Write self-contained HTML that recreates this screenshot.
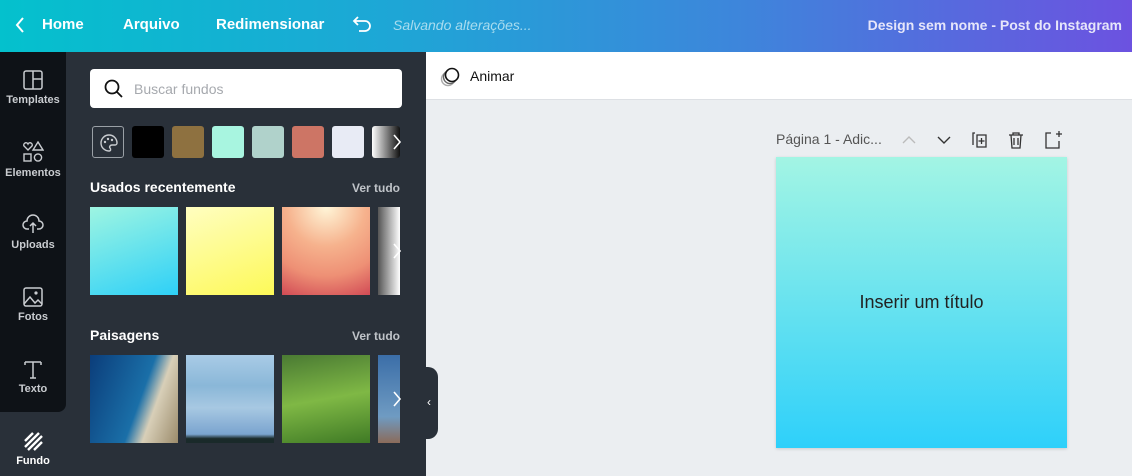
<!DOCTYPE html>
<html><head><meta charset="utf-8"><style>
*{margin:0;padding:0;box-sizing:border-box}
body{width:1132px;height:476px;overflow:hidden;font-family:"Liberation Sans",sans-serif;background:#ebeef1;position:relative}
.top{position:absolute;left:0;top:0;width:1132px;height:52px;background:linear-gradient(90deg,#04c1cd 0%,#1ea6d6 35%,#3d86db 65%,#6c52e0 100%);color:#fff;font-weight:bold;font-size:15px}
.top span{position:absolute;top:16px}
.under{position:absolute;left:0;top:52px;width:426px;height:424px;background:#293039}
.rail{position:absolute;left:0;top:52px;width:66px;height:360px;background:#0e1217;border-bottom-right-radius:8px}
.ri{position:absolute;left:0;width:66px;text-align:center;color:#c9ccd0;font-size:11px;font-weight:bold}
.ri svg{display:block;margin:0 auto 4px}
.search{position:absolute;left:90px;top:69px;width:312px;height:39px;background:#fff;border-radius:4px}
.sw{position:absolute;top:126px;width:32px;height:32px;border-radius:3px}
.h{position:absolute;color:#fff;font-weight:bold;font-size:14px}
.v{position:absolute;color:#bfc3c8;font-weight:bold;font-size:12px}
.th{position:absolute;width:88px;height:88px}
.tool{position:absolute;left:426px;top:52px;width:706px;height:48px;background:#fff;border-bottom:1px solid #dde0e4}
.chev{position:absolute}
</style></head><body>
<div class="top">
<svg style="position:absolute;left:14px;top:16px" width="12" height="18"><path d="M9 2L3 9l6 7" stroke="#fff" stroke-width="2" fill="none"/></svg>
<span style="left:42px">Home</span><span style="left:123px">Arquivo</span><span style="left:216px">Redimensionar</span>
<svg style="position:absolute;left:352px;top:14px" width="22" height="20"><path d="M6 3L2 7l4 4M2 7h11a5 5 0 0 1 0 10H7" stroke="#fff" stroke-width="1.8" fill="none"/></svg>
<span style="left:393px;font-weight:normal;font-style:italic;color:#a8dcef;font-size:14px;top:17px">Salvando alterações...</span>
<span style="right:10px;color:#e6e6fa;font-size:14px;top:17px">Design sem nome - Post do Instagram</span>
</div>
<div class="under"></div>
<div class="rail"></div>
<div class="ri" style="top:70px"><svg width="20" height="20"><rect x="1" y="1" width="18" height="18" rx="2" stroke="#c9ccd0" stroke-width="1.5" fill="none"/><path d="M10 1v18M10 9h9" stroke="#c9ccd0" stroke-width="1.5"/></svg>Templates</div>
<div class="ri" style="top:141px"><svg width="22" height="22"><path d="M6 9L2 5a2 2 0 0 1 4-2 2 2 0 0 1 4 2z" stroke="#c9ccd0" stroke-width="1.4" fill="none"/><path d="M16 1l5 8h-10z" stroke="#c9ccd0" stroke-width="1.4" fill="none"/><rect x="2" y="13" width="7" height="7" stroke="#c9ccd0" stroke-width="1.4" fill="none"/><circle cx="16" cy="16.5" r="3.6" stroke="#c9ccd0" stroke-width="1.4" fill="none"/></svg>Elementos</div>
<div class="ri" style="top:213px"><svg width="22" height="22"><path d="M7 16H5a4 4 0 0 1 0-8 6 6 0 0 1 12 0 4 4 0 0 1 0 8h-2M11 20v-9M8 13l3-3 3 3" stroke="#c9ccd0" stroke-width="1.5" fill="none"/></svg>Uploads</div>
<div class="ri" style="top:287px"><svg width="20" height="20"><rect x="1" y="1" width="18" height="18" rx="2" stroke="#c9ccd0" stroke-width="1.5" fill="none"/><path d="M1 17l6-7 5 6 3-3 4 4" stroke="#c9ccd0" stroke-width="1.5" fill="none"/><circle cx="13" cy="6" r="1.6" fill="#c9ccd0"/></svg>Fotos</div>
<div class="ri" style="top:359px"><svg width="20" height="20"><path d="M2 3h16M10 3v16M2 3v3M18 3v3M7 19h6" stroke="#c9ccd0" stroke-width="1.5" fill="none"/></svg>Texto</div>
<div class="ri" style="top:431px;color:#fff"><svg width="20" height="20"><path d="M2 10l8-8M2 16L16 2M5 19L19 5M11 19l8-8" stroke="#fff" stroke-width="2.4"/></svg>Fundo</div>
<div class="search"><svg style="position:absolute;left:14px;top:10px" width="20" height="20"><circle cx="8" cy="8" r="6.5" stroke="#111" stroke-width="1.8" fill="none"/><path d="M13 13l5 5" stroke="#111" stroke-width="1.8"/></svg><span style="position:absolute;left:44px;top:12px;color:#a6a9ae;font-size:14px">Buscar fundos</span></div>
<div class="sw" style="left:92px;border:1px solid #9aa0a6"><svg style="position:absolute;left:6px;top:6px" width="20" height="20"><path d="M10 2a8 8 0 0 0 0 16c2 0 2-2 1-3s0-3 2-3h3a2 2 0 0 0 2-2 8 8 0 0 0-8-8z" stroke="#c9ccd0" stroke-width="1.4" fill="none"/><circle cx="6" cy="9" r="1.2" fill="#c9ccd0"/><circle cx="9" cy="6" r="1.2" fill="#c9ccd0"/><circle cx="13" cy="7" r="1.2" fill="#c9ccd0"/></svg></div>
<div class="sw" style="left:132px;background:#000"></div>
<div class="sw" style="left:172px;background:#8e7140"></div>
<div class="sw" style="left:212px;background:#a8f5e0"></div>
<div class="sw" style="left:252px;background:#b0d2cb"></div>
<div class="sw" style="left:292px;background:#cd7565"></div>
<div class="sw" style="left:332px;background:#e8ebf5"></div>
<div class="sw" style="left:372px;width:28px;background:linear-gradient(90deg,#fff,#111)"></div>
<svg class="chev" style="left:392px;top:134px" width="10" height="16"><path d="M2 1l6 7-6 7" stroke="#fff" stroke-width="1.6" fill="none"/></svg>
<div class="h" style="left:90px;top:179px">Usados recentemente</div><div class="v" style="left:352px;top:181px">Ver tudo</div>
<div class="th" style="left:90px;top:207px;background:linear-gradient(160deg,#9ef5e2,#2ed0f7)"></div>
<div class="th" style="left:186px;top:207px;background:linear-gradient(160deg,#fffec0,#fdf958)"></div>
<div class="th" style="left:282px;top:207px;background:radial-gradient(circle at 50% 0%,#fff6d8 0%,#f6b28d 40%,#ee9075 70%,#d14a55 100%)"></div>
<div class="th" style="left:378px;top:207px;width:22px;background:linear-gradient(90deg,#555,#fff)"></div>
<svg class="chev" style="left:392px;top:243px" width="10" height="16"><path d="M2 1l6 7-6 7" stroke="#fff" stroke-width="1.6" fill="none"/></svg>
<div class="h" style="left:90px;top:327px">Paisagens</div><div class="v" style="left:352px;top:329px">Ver tudo</div>
<div class="th" style="left:90px;top:355px;background:linear-gradient(110deg,#0b3d7a 0%,#1a6fa8 55%,#d8cfb8 70%,#9b8b6b 100%)"></div>
<div class="th" style="left:186px;top:355px;background:linear-gradient(180deg,#a9cbe6 0%,#8ab7d8 35%,#a7c8e2 60%,#7aa4cf 90%,#1a2a2a 95%)"></div>
<div class="th" style="left:282px;top:355px;background:linear-gradient(170deg,#4a7a33,#7fb845 50%,#3f7a25)"></div>
<div class="th" style="left:378px;top:355px;width:22px;background:linear-gradient(180deg,#3b6ea8,#6f9bc2 70%,#8b6b5a)"></div>
<svg class="chev" style="left:392px;top:391px" width="10" height="16"><path d="M2 1l6 7-6 7" stroke="#fff" stroke-width="1.6" fill="none"/></svg>
<div style="position:absolute;left:420px;top:367px;width:18px;height:72px;background:#293039;border-radius:0 10px 10px 0"></div>
<div style="position:absolute;left:427px;top:395px;color:#fff;font-size:12px">‹</div>
<div class="tool"><svg style="position:absolute;left:14px;top:14px" width="22" height="22"><circle cx="8" cy="13" r="6.5" stroke="#aaa" stroke-width="1.4" fill="none"/><circle cx="10" cy="11" r="6.5" stroke="#666" stroke-width="1.4" fill="#fff"/><circle cx="12" cy="9" r="6.5" stroke="#111" stroke-width="1.6" fill="#fff"/></svg><span style="position:absolute;left:44px;top:16px;font-size:14px;color:#111">Animar</span></div>
<div style="position:absolute;left:776px;top:131px;font-size:14px;color:#555">Página 1 - Adic...</div>
<svg style="position:absolute;left:900px;top:130px" width="170" height="20"><path d="M3 13l6-6 6 6" stroke="#bbb" stroke-width="1.4" fill="none"/><path d="M38 7l6 6 6-6" stroke="#333" stroke-width="1.4" fill="none"/><path d="M75 3h-2v12M77 5h9v12h-9z M81.5 8v6M78.5 11h6" stroke="#333" stroke-width="1.3" fill="none"/><path d="M109 5h14M113 5V3h6v2M111 5l1 13h8l1-13M114 8v7M118 8v7" stroke="#333" stroke-width="1.3" fill="none"/><path d="M151 3h-5v15h13v-7M156 4h6M159 1v6" stroke="#333" stroke-width="1.3" fill="none"/></svg>
<div style="position:absolute;left:776px;top:157px;width:291px;height:291px;background:linear-gradient(180deg,#a3f5e4,#2ed0fa);box-shadow:0 1px 3px rgba(0,0,0,.15)"><div style="position:absolute;top:135px;width:100%;text-align:center;font-size:18px;color:#222">Inserir um título</div></div>
</body></html>
